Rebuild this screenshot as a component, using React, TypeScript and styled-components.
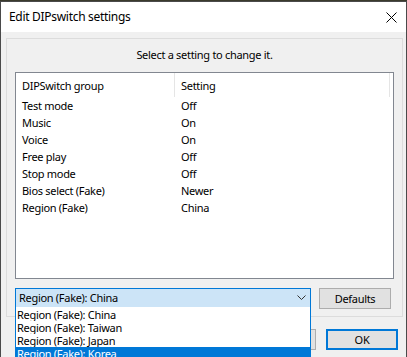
import React from 'react';
import styled, { createGlobalStyle } from 'styled-components';

const GlobalStyle = createGlobalStyle`
  html, body {
    margin: 0;
    padding: 0;
    background: #3a3a2c;
    overflow: hidden;
  }
  body {
    font-family: "Noto Sans", "DejaVu Sans", sans-serif;
    font-size: 11px;
    letter-spacing: -0.3px;
    color: #000;
  }
`;

const Window = styled.div`
  position: relative;
  margin-top: 1px;
  width: 405px;
  height: 356px;
  overflow: hidden;
  border: 1px solid #4a4a4a;
  border-bottom: none;
  background: #f0f0f0;
`;

const TitleBar = styled.div`
  height: 30px;
  background: #fff;
  display: flex;
  align-items: center;
  justify-content: space-between;
  padding: 0 9px 0 8px;
`;

const Title = styled.span`
  font-size: 12px;
  letter-spacing: -0.3px;
  margin-bottom: 2px;
`;

const Body = styled.div`
  padding: 6px 3px 0 5px;
`;

const Panel = styled.div`
  position: relative;
  border: 1px solid #dcdcdc;
  padding: 8px 8px 7px 8px;
`;

const Caption = styled.div`
  text-align: center;
  height: 25px;
  line-height: 16px;
`;

const ListView = styled.div`
  height: 205px;
  background: #fff;
  border: 1px solid #828790;
  overflow: hidden;
`;

const HeaderRow = styled.div`
  display: flex;
  height: 24px;
  margin-bottom: 1px;
  align-items: stretch;
`;

const HeaderCell = styled.div<{ $width: number }>`
  width: ${p => p.$width}px;
  border-right: 1px solid #e5e5e5;
  padding-left: 6px;
  display: flex;
  align-items: center;
  box-sizing: border-box;
`;

const Row = styled.div`
  display: flex;
  height: 17px;
  line-height: 15px;
`;

const Cell = styled.div<{ $width: number }>`
  width: ${p => p.$width}px;
  padding-left: 6px;
  box-sizing: border-box;
  white-space: nowrap;
`;

const Controls = styled.div`
  display: flex;
  gap: 8px;
  margin-top: 9px;
`;

const Combo = styled.div`
  width: 296px;
  height: 20px;
  box-sizing: border-box;
  background: #cce4f7;
  border: 1px solid #0078d7;
  display: flex;
  align-items: center;
  justify-content: space-between;
  padding: 0 4px 1px 3px;
`;

const Button = styled.div<{ $default?: boolean }>`
  width: 72px;
  height: 21px;
  box-sizing: border-box;
  background: #e1e1e1;
  border: ${p => (p.$default ? '2px solid #0078d7' : '1px solid #adadad')};
  display: flex;
  align-items: center;
  justify-content: center;
  padding-bottom: 1px;
`;

const Footer = styled.div`
  display: flex;
  justify-content: flex-end;
  gap: 10px;
  padding: 12px 5px 0 0;
`;

const DropList = styled.div`
  position: absolute;
  left: 8px;
  top: 268px;
  width: 296px;
  box-sizing: border-box;
  background: #fff;
  border: 1px solid #0078d7;
  border-top: none;
  padding-top: 1px;
`;

const Option = styled.div<{ $selected?: boolean }>`
  height: 13px;
  line-height: 13px;
  overflow: hidden;
  padding-left: 1px;
  background: ${p => (p.$selected ? '#0078d7' : 'transparent')};
  color: ${p => (p.$selected ? '#fff' : '#000')};
`;

const rows: [string, string][] = [
  ['Test mode', 'Off'],
  ['Music', 'On'],
  ['Voice', 'On'],
  ['Free play', 'Off'],
  ['Stop mode', 'Off'],
  ['Bios select (Fake)', 'Newer'],
  ['Region (Fake)', 'China'],
];

const options = ['China', 'Taiwan', 'Japan', 'Korea'];

const CloseIcon = () => (
  <svg width="11" height="11" viewBox="0 0 11 11">
    <path d="M0.5 0.5 L10.5 10.5 M10.5 0.5 L0.5 10.5" stroke="#000" strokeWidth="1" />
  </svg>
);

const Chevron = () => (
  <svg width="9" height="5" viewBox="0 0 9 5">
    <path d="M0.5 0.5 L4.5 4.5 L8.5 0.5" stroke="#333" strokeWidth="1" fill="none" />
  </svg>
);

export default function App() {
  return (
    <>
      <GlobalStyle />
      <Window>
        <TitleBar>
          <Title>Edit DIPswitch settings</Title>
          <CloseIcon />
        </TitleBar>
        <Body>
          <Panel>
            <Caption>Select a setting to change it.</Caption>
            <ListView>
              <HeaderRow>
                <HeaderCell $width={159}>DIPSwitch group</HeaderCell>
                <HeaderCell $width={215}>Setting</HeaderCell>
              </HeaderRow>
              {rows.map(([group, value]) => (
                <Row key={group}>
                  <Cell $width={159}>{group}</Cell>
                  <Cell $width={215}>{value}</Cell>
                </Row>
              ))}
            </ListView>
            <Controls>
              <Combo>
                <span>Region (Fake): China</span>
                <Chevron />
              </Combo>
              <Button>Defaults</Button>
            </Controls>
            <DropList>
              {options.map(o => (
                <Option key={o} $selected={o === 'Korea'}>
                  Region (Fake): {o}
                </Option>
              ))}
            </DropList>
          </Panel>
          <Footer>
            <Button>Cancel</Button>
            <Button $default>OK</Button>
          </Footer>
        </Body>
      </Window>
    </>
  );
}
